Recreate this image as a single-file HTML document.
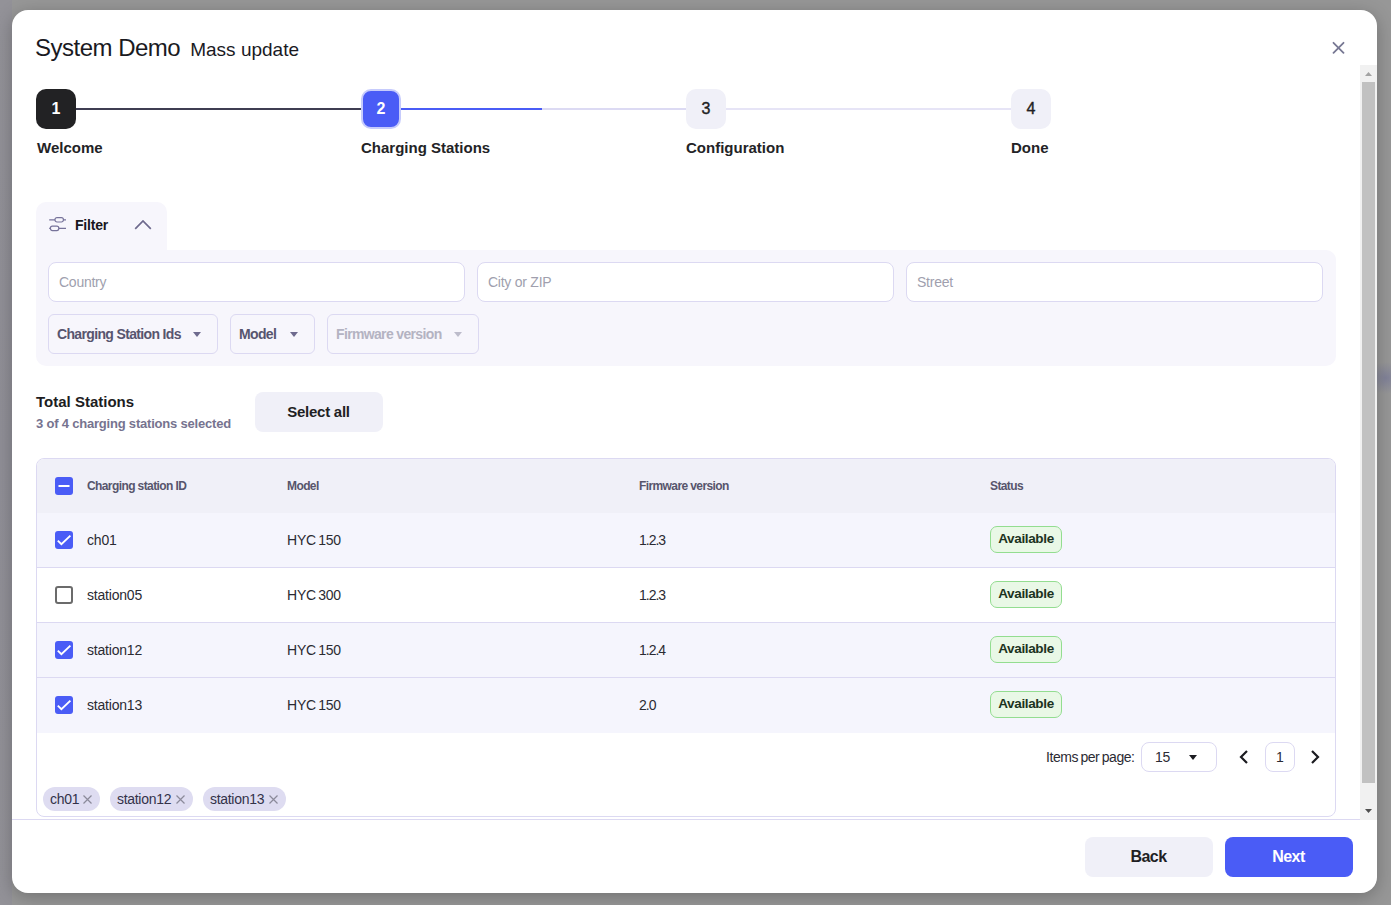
<!DOCTYPE html>
<html><head><meta charset="utf-8">
<style>
*{box-sizing:border-box;margin:0;padding:0}
html,body{width:1391px;height:905px;overflow:hidden}
body{font-family:"Liberation Sans",sans-serif;background:#979797;position:relative;color:#1f1f24}
.abs{position:absolute}
#modal{position:absolute;left:12px;top:10px;width:1365px;height:883px;background:#fff;border-radius:16px;overflow:hidden;box-shadow:0 4px 18px rgba(0,0,0,.25)}
.title{left:23px;top:24px;font-size:24px;white-space:nowrap;color:#1a1a1f;letter-spacing:-0.5px}
.title span{font-size:19px;margin-left:10px;letter-spacing:0}
/* steps */
.step{width:40px;height:40px;border-radius:10px;font-size:16px;font-weight:bold;text-align:center;line-height:40px}
.s1{background:#222224;color:#fff}
.s2{background:#4a5cf6;color:#fff;border:2px solid #c6cbfc;line-height:36px}
.s3{background:#f0f0f8;color:#1f1f24;font-weight:normal;font-size:16px;-webkit-text-stroke:0.4px #1f1f24}
.line{height:2px}
.slabel{font-size:15px;font-weight:bold;white-space:nowrap;color:#232326}
/* filter */
.tab{left:24px;top:192px;width:131px;height:50px;background:#f7f6fc;border-radius:10px 10px 0 0}
.panel{left:24px;top:240px;width:1300px;height:116px;background:#f7f6fc;border-radius:0 10px 10px 10px}
.inp{height:40px;width:417px;background:#fff;border:1px solid #dcd9f2;border-radius:8px;font-size:14px;color:#a09fae;padding-left:10px;line-height:38px;letter-spacing:-0.25px}
.dd{height:40px;background:#f7f6fc;border:1px solid #dcd9f2;border-radius:6px;font-size:14px;font-weight:bold;color:#57556f;padding-left:8px;line-height:38px;white-space:nowrap;letter-spacing:-0.65px}
.caret{position:absolute;top:17px;width:0;height:0;border-left:4.5px solid transparent;border-right:4.5px solid transparent;border-top:5px solid #6e6a8e}
/* table */
.tbl{left:24px;top:448px;width:1300px;height:359px;border:1px solid #dcd9f2;border-radius:8px;overflow:hidden}
.hdr{left:0;top:0;width:1298px;height:54px;background:#f0f0f8}
.row{left:0;width:1298px;height:55px;background:#f5f5fd}
.row.w{background:#fff}
.cbe{width:18px;height:18px;border-radius:3px;border:2px solid #6b6b6b;background:#fff}
.th{font-size:12px;font-weight:bold;color:#57556c;white-space:nowrap;letter-spacing:-0.6px}
.td{font-size:14px;color:#2b2b33;white-space:nowrap;letter-spacing:-0.2px;word-spacing:-1.5px}
.fw{letter-spacing:-1px}
.badge{width:72px;height:27px;border:1px solid #93dd90;background:#e9f8e6;border-radius:7px;font-size:13.5px;font-weight:bold;color:#1c3320;text-align:center;line-height:24px;letter-spacing:-0.35px}
.chip{height:24px;border-radius:12px;background:#dedcf1;font-size:14px;color:#33324a;white-space:nowrap;padding-left:7px;line-height:24px;letter-spacing:-0.3px}
.btn{height:40px;width:128px;border-radius:8px;font-size:16px;font-weight:bold;text-align:center;line-height:40px;letter-spacing:-0.5px;text-indent:-1px}
</style></head>
<body>
<div class="abs" style="left:0;top:0;width:12px;height:905px;background:linear-gradient(to bottom,#939298,#908f97 50%,#939298)"></div>
<div class="abs" style="left:1366px;top:358px;width:40px;height:40px;background:radial-gradient(ellipse 50% 40% at 50% 50%,rgba(112,114,155,.55),rgba(112,114,155,0))"></div>
<div id="modal">
  <div class="abs title">System Demo<span>Mass update</span></div>
  <svg class="abs" style="left:1320px;top:31px" width="13" height="13" viewBox="0 0 13 13"><path d="M1.5 1.8L11.5 11.8M11.5 1.8L1.5 11.8" stroke="#777893" stroke-width="1.8" stroke-linecap="round" fill="none"/></svg>

  <!-- steps -->
  <div class="abs line" style="left:64px;top:98px;width:286px;background:#3f3d52"></div>
  <div class="abs line" style="left:389px;top:98px;width:141px;background:#4a5cf6"></div>
  <div class="abs line" style="left:530px;top:98px;width:145px;background:#dcdaf3"></div>
  <div class="abs line" style="left:714px;top:98px;width:286px;background:#e6e4f6"></div>
  <div class="abs step s1" style="left:24px;top:79px">1</div>
  <div class="abs step s2" style="left:349px;top:79px">2</div>
  <div class="abs step s3" style="left:674px;top:79px">3</div>
  <div class="abs step s3" style="left:999px;top:79px">4</div>
  <div class="abs slabel" style="left:25px;top:129px">Welcome</div>
  <div class="abs slabel" style="left:349px;top:129px">Charging Stations</div>
  <div class="abs slabel" style="left:674px;top:129px">Configuration</div>
  <div class="abs slabel" style="left:999px;top:129px">Done</div>

  <!-- filter -->
  <div class="abs tab"></div>
  <div class="abs panel"></div>
  <svg class="abs" style="left:36px;top:206px" width="19" height="16" viewBox="0 0 19 16">
    <path d="M1.2 3.8H7M15.4 3.8H18M1.2 12.4H2.4M10.8 12.4H18" stroke="#77739a" stroke-width="1.2" fill="none"/>
    <rect x="7" y="1.6" width="8.4" height="4.4" rx="2" stroke="#77739a" stroke-width="1.2" fill="none"/>
    <rect x="2.4" y="10.2" width="8.4" height="4.4" rx="2" stroke="#77739a" stroke-width="1.2" fill="none"/>
  </svg>
  <div class="abs" style="left:63px;top:207px;font-size:14px;font-weight:bold;color:#17171c;letter-spacing:-0.2px">Filter</div>
  <svg class="abs" style="left:122px;top:209px" width="18" height="11" viewBox="0 0 18 11"><path d="M1.2 9.8L9 2L16.8 9.8" stroke="#6e6a8e" stroke-width="1.7" fill="none"/></svg>
  <div class="abs inp" style="left:36px;top:252px">Country</div>
  <div class="abs inp" style="left:465px;top:252px">City or ZIP</div>
  <div class="abs inp" style="left:894px;top:252px">Street</div>
  <div class="abs dd" style="left:36px;top:304px;width:170px">Charging Station Ids<i class="caret" style="left:144px"></i></div>
  <div class="abs dd" style="left:218px;top:304px;width:85px">Model<i class="caret" style="left:59px"></i></div>
  <div class="abs dd" style="left:315px;top:304px;width:152px;color:#b4b3c2">Firmware version<i class="caret" style="left:126px;border-top-color:#bdbccb"></i></div>

  <!-- total -->
  <div class="abs" style="left:24px;top:383px;font-size:15px;font-weight:bold;color:#1d1d22">Total Stations</div>
  <div class="abs" style="left:24px;top:406px;font-size:13px;font-weight:bold;color:#76738f;letter-spacing:-0.2px">3 of 4 charging stations selected</div>
  <div class="abs btn" style="left:243px;top:382px;background:#f0f0f8;color:#1f1f24;font-size:15px;letter-spacing:-0.25px">Select all</div>

  <!-- table -->
  <div class="abs tbl">
    <div class="abs hdr">
      <svg class="abs" style="left:18px;top:18px" width="18" height="18" viewBox="0 0 18 18"><rect width="18" height="18" rx="3" fill="#4a5cf6"/><rect x="3.5" y="8" width="11" height="2" fill="#fff"/></svg>
      <div class="abs th" style="left:50px;top:20px">Charging station ID</div>
      <div class="abs th" style="left:250px;top:20px">Model</div>
      <div class="abs th" style="left:602px;top:20px">Firmware version</div>
      <div class="abs th" style="left:953px;top:20px">Status</div>
    </div>
    <div class="abs row" style="top:54px;border-bottom:1px solid #dcd9f2;">
      <svg class="abs" style="left:18px;top:18px" width="18" height="18" viewBox="0 0 18 18"><rect width="18" height="18" rx="3" fill="#4a5cf6"/><path d="M2.8 9.6L6.4 13.2L15.4 4.6" stroke="#fff" stroke-width="1.9" fill="none"/></svg>
      <div class="abs td" style="left:50px;top:19px">ch01</div>
      <div class="abs td" style="left:250px;top:19px">HYC 150</div>
      <div class="abs td fw" style="left:602px;top:19px">1.2.3</div>
      <div class="abs badge" style="left:953px;top:13px">Available</div>
    </div>
    <div class="abs row w" style="top:109px;border-bottom:1px solid #dcd9f2;">
      <div class="abs cbe" style="left:18px;top:18px"></div>
      <div class="abs td" style="left:50px;top:19px">station05</div>
      <div class="abs td" style="left:250px;top:19px">HYC 300</div>
      <div class="abs td fw" style="left:602px;top:19px">1.2.3</div>
      <div class="abs badge" style="left:953px;top:13px">Available</div>
    </div>
    <div class="abs row" style="top:164px;border-bottom:1px solid #dcd9f2;">
      <svg class="abs" style="left:18px;top:18px" width="18" height="18" viewBox="0 0 18 18"><rect width="18" height="18" rx="3" fill="#4a5cf6"/><path d="M2.8 9.6L6.4 13.2L15.4 4.6" stroke="#fff" stroke-width="1.9" fill="none"/></svg>
      <div class="abs td" style="left:50px;top:19px">station12</div>
      <div class="abs td" style="left:250px;top:19px">HYC 150</div>
      <div class="abs td fw" style="left:602px;top:19px">1.2.4</div>
      <div class="abs badge" style="left:953px;top:13px">Available</div>
    </div>
    <div class="abs row" style="top:219px;">
      <svg class="abs" style="left:18px;top:18px" width="18" height="18" viewBox="0 0 18 18"><rect width="18" height="18" rx="3" fill="#4a5cf6"/><path d="M2.8 9.6L6.4 13.2L15.4 4.6" stroke="#fff" stroke-width="1.9" fill="none"/></svg>
      <div class="abs td" style="left:50px;top:19px">station13</div>
      <div class="abs td" style="left:250px;top:19px">HYC 150</div>
      <div class="abs td fw" style="left:602px;top:19px">2.0</div>
      <div class="abs badge" style="left:953px;top:13px">Available</div>
    </div>

    <div class="abs td" style="left:1009px;top:290px;letter-spacing:-0.45px;word-spacing:-1px">Items per page:</div>
    <div class="abs" style="left:1104px;top:283px;width:76px;height:30px;border:1px solid #dcd9f2;border-radius:8px"></div>
    <div class="abs td" style="left:1118px;top:290px">15</div>
    <i class="caret" style="left:1152px;top:296px;border-top-color:#1b1b20"></i>
    <svg class="abs" style="left:1201px;top:290px" width="12" height="16" viewBox="0 0 12 16"><path d="M9 2L3 8L9 14" stroke="#1b1b20" stroke-width="2.2" fill="none"/></svg>
    <div class="abs" style="left:1228px;top:283px;width:30px;height:30px;border:1px solid #dcd9f2;border-radius:8px;text-align:center;line-height:28px;font-size:14px;color:#2b2b33">1</div>
    <svg class="abs" style="left:1272px;top:290px" width="12" height="16" viewBox="0 0 12 16"><path d="M3 2L9 8L3 14" stroke="#1b1b20" stroke-width="2.2" fill="none"/></svg>
    <div class="abs chip" style="left:6px;top:328px;width:57px">ch01</div>
    <div class="abs chip" style="left:73px;top:328px;width:83px">station12</div>
    <div class="abs chip" style="left:166px;top:328px;width:83px">station13</div>
    <svg class="abs" style="left:46px;top:336px" width="9" height="9" viewBox="0 0 9 9"><path d="M.5 .5L8.5 8.5M8.5 .5L.5 8.5" stroke="#8b8a9a" stroke-width="1.2" fill="none"/></svg>
    <svg class="abs" style="left:139px;top:336px" width="9" height="9" viewBox="0 0 9 9"><path d="M.5 .5L8.5 8.5M8.5 .5L.5 8.5" stroke="#8b8a9a" stroke-width="1.2" fill="none"/></svg>
    <svg class="abs" style="left:232px;top:336px" width="9" height="9" viewBox="0 0 9 9"><path d="M.5 .5L8.5 8.5M8.5 .5L.5 8.5" stroke="#8b8a9a" stroke-width="1.2" fill="none"/></svg>
  </div>

  <!-- footer -->
  <div class="abs" style="left:0;top:809px;width:1365px;height:1px;background:#dcd9f2"></div>
  <div class="abs btn" style="left:1073px;top:827px;background:#f0f0f8;color:#1f1f24">Back</div>
  <div class="abs btn" style="left:1213px;top:827px;background:#4a5cf6;color:#fff">Next</div>

  <!-- scrollbar -->
  <div class="abs" style="left:1348px;top:55px;width:17px;height:755px;background:#f1f1f1"></div>
  <div class="abs" style="left:1350px;top:72px;width:13px;height:701px;background:#c1c1c1"></div>
  <svg class="abs" style="left:1352px;top:61px" width="9" height="6" viewBox="0 0 9 6"><path d="M1 5L4.5 1L8 5Z" fill="#a3a3a3"/></svg>
  <svg class="abs" style="left:1352px;top:798px" width="9" height="6" viewBox="0 0 9 6"><path d="M1 1L4.5 5L8 1Z" fill="#505050"/></svg>
</div>
</body></html>
